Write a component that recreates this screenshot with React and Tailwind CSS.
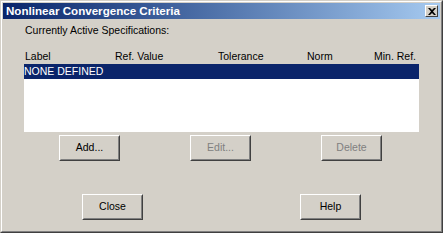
export default function App() {
  const font = { fontFamily: '"Liberation Sans", Arial, sans-serif' };
  return (
    <div
      className="w-[443px] h-[233px] bg-[#d4d0c8] border border-t-[#d4d0c8] border-l-[#d4d0c8] border-r-[#404040] border-b-[#404040] text-[10.5px] text-black overflow-hidden"
      style={font}
    >
      <div className="h-full border border-t-white border-l-white border-r-[#808080] border-b-[#808080] p-px flex flex-col">
        {/* title bar */}
        <div className="h-[16px] flex items-center bg-gradient-to-r from-[#0a246a] to-[#a6caf0] pl-[3px] pr-[2px]">
          <span className="text-white font-bold text-[11.6px] leading-[16px] flex-1">Nonlinear Convergence Criteria</span>
          <div className="w-[13px] h-[12px] bg-[#d4d0c8] border border-t-white border-l-white border-r-[#404040] border-b-[#404040] flex items-center justify-center">
            <svg width="8" height="7" viewBox="0 0 8 7">
              <path d="M0 0h2l2 2 2-2h2L5 3.5 8 7H6L4 5 2 7H0l3-3.5z" fill="black" />
            </svg>
          </div>
        </div>

        {/* content */}
        <div className="flex flex-col">
          <div className="mt-[5px] pl-[22px] leading-[13px]">Currently Active Specifications:</div>

          <div className="mt-[13px] pl-[22px] flex leading-[13px]">
            <span className="w-[90px]">Label</span>
            <span className="w-[103px]">Ref. Value</span>
            <span className="w-[89px]">Tolerance</span>
            <span className="w-[67px]">Norm</span>
            <span>Min. Ref.</span>
          </div>

          <div className="mt-[1px] ml-[21px] w-[395px] h-[68px] bg-white">
            <div className="h-[15px] bg-[#0a246a] text-white leading-[15px]">NONE DEFINED</div>
          </div>

          <div className="mt-[3px] pl-[56px] flex gap-[70px]">
            <Btn>Add...</Btn>
            <Btn disabled>Edit...</Btn>
            <Btn disabled>Delete</Btn>
          </div>

          <div className="mt-[33px] pl-[79px] flex gap-[157px]">
            <Btn>Close</Btn>
            <Btn>Help</Btn>
          </div>
        </div>
      </div>
    </div>
  );
}

function Btn({ children, disabled }) {
  return (
    <div className="w-[61px] h-[26px] border border-t-white border-l-white border-r-[#404040] border-b-[#404040]">
      <div
        className={`h-full border border-t-[#d4d0c8] border-l-[#d4d0c8] border-r-[#808080] border-b-[#808080] flex items-center justify-center ${
          disabled ? 'text-[#808080]' : 'text-black'
        }`}
      >
        {children}
      </div>
    </div>
  );
}
